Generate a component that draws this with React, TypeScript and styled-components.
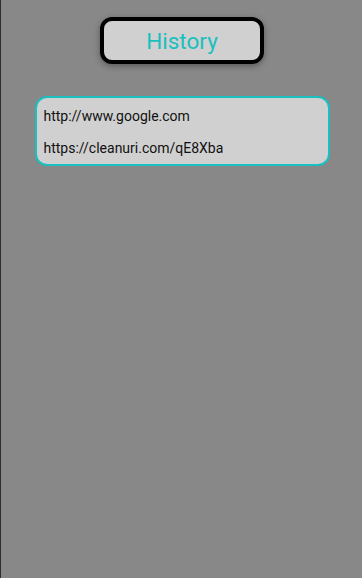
import styled, { createGlobalStyle } from "styled-components"

const GlobalStyle = createGlobalStyle`
html, body {
  margin: 0;
  padding: 0;
  background: #888888;
}
body {
  font-family: Roboto, "Liberation Sans", sans-serif;
}
`

const Screen = styled.div`
box-sizing: border-box;
width: 362px;
height: 578px;
border-left: 1px solid #2e2e2e;
display: flex;
flex-direction: column;
align-items: center;
padding-top: 17px;
`

const TitleButton = styled.button`
box-sizing: border-box;
width: 164px;
height: 47px;
background: #d0d0d0;
border: 4px solid #000;
border-radius: 12px;
box-shadow: 0 2px 6px rgba(0, 0, 0, 0.35);
color: #1abfbf;
font-family: Roboto, "Liberation Sans", sans-serif;
font-size: 22.5px;
padding: 1px 0 0;
margin-left: 1px;
`

const HistoryList = styled.ul`
box-sizing: border-box;
list-style: none;
margin: 32px 0 0 1px;
width: 295px;
padding: 2px 0 0 7px;
background: #d0d0d0;
border: 2px solid #1abfbf;
border-radius: 12px;
`

const HistoryItem = styled.li`
height: 32px;
line-height: 32px;
font-size: 14px;
color: #111;
`

const entries = ["http://www.google.com", "https://cleanuri.com/qE8Xba"]

export default function App() {
  return (
    <>
      <GlobalStyle />
      <Screen>
        <TitleButton>History</TitleButton>
        <HistoryList>
          {entries.map((url) => (
            <HistoryItem key={url}>{url}</HistoryItem>
          ))}
        </HistoryList>
      </Screen>
    </>
  )
}
